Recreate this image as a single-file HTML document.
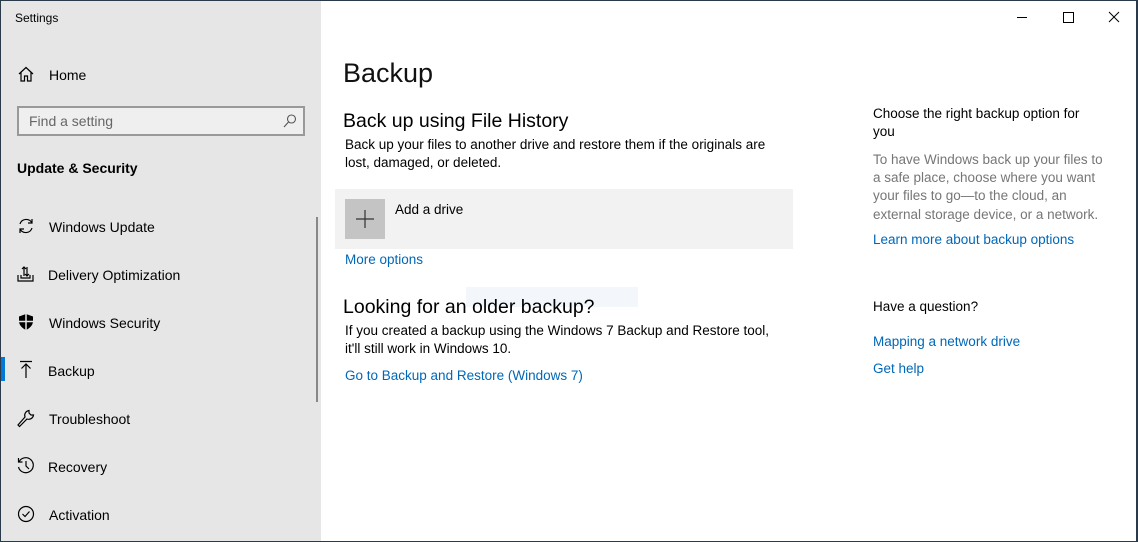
<!DOCTYPE html>
<html><head><meta charset="utf-8"><style>
*{margin:0;padding:0;box-sizing:border-box}
body{width:1138px;height:542px;overflow:hidden;background:#fff;font-family:"Liberation Sans",sans-serif;color:#000;position:relative}
.a{position:absolute;white-space:nowrap}
.side{position:absolute;left:0;top:0;width:321px;height:542px;background:#e6e6e6;border-left:1px solid #2b3a4a;border-bottom:1px solid #2b3a4a}
.nav{font-size:14px;color:#000}
.lnk{color:#0067b8;font-size:13.5px}
.p{font-size:13.5px}
svg{position:absolute}
</style></head><body>
<div class="side"></div>
<div style="position:absolute;right:0;top:0;width:2px;height:542px;background:#2b3a4a"></div>
<div style="position:absolute;left:0;top:0;width:1138px;height:1px;background:#2b3a4a"></div>
<div style="position:absolute;left:321px;bottom:0;width:817px;height:1px;background:#2b3a4a"></div>
<div class="a" style="left:15px;top:11px;font-size:12px">Settings</div>
<svg style="left:17px;top:65px" width="18" height="18" viewBox="0 0 18 18" fill="none" stroke="#000" stroke-width="1.2"><path d="M2 9 L9 2.5 L16 9 M4 7.5 V16 H7.5 V11 H10.5 V16 H14 V7.5"/></svg>
<div class="a nav" style="left:49px;top:67px">Home</div>
<div style="position:absolute;left:17px;top:106px;width:288px;height:30px;border:2px solid #999;background:#efefef"></div>
<div class="a" style="left:29px;top:113px;font-size:14px;color:#666">Find a setting</div>
<svg style="left:282px;top:113px" width="16" height="16" viewBox="0 0 16 16" fill="none" stroke="#555" stroke-width="1.1"><circle cx="9.5" cy="6" r="4"/><path d="M6.5 9 L2 14"/></svg>
<div class="a" style="left:17px;top:160px;font-size:14px;font-weight:bold">Update &amp; Security</div>
<svg style="left:16px;top:216px" width="20" height="20" viewBox="0 0 20 20" fill="none" stroke="#000" stroke-width="1.2"><path d="M4 8 A6.5 6.5 0 0 1 16 7 M16 3 V7 H12 M16 12 A6.5 6.5 0 0 1 4 13 M4 17 V13 H8"/></svg>
<div class="a nav" style="left:49px;top:219px">Windows Update</div>
<svg style="left:16px;top:264px" width="20" height="20" viewBox="0 0 20 20" fill="none" stroke="#000" stroke-width="1.2"><path d="M2 11 V17 H17 V11 M5 11 V14 H14 V11 M8 12 V3 M6 5 L8 3 L10 5 M11 3 V12 M9 10 L11 12 L13 10"/></svg>
<div class="a nav" style="left:48px;top:267px">Delivery Optimization</div>
<svg style="left:16px;top:312px" width="20" height="20" viewBox="0 0 20 20"><path d="M10 2 L17 4.5 V9 C17 13 14 16 10 18 C6 16 3 13 3 9 V4.5 Z" fill="#000"/><path d="M10 2 V18 M3 9.5 H17" stroke="#e6e6e6" stroke-width="1.5"/></svg>
<div class="a nav" style="left:49px;top:315px">Windows Security</div>
<div style="position:absolute;left:1px;top:357px;width:4px;height:24px;background:#0078d7"></div>
<svg style="left:16px;top:360px" width="20" height="20" viewBox="0 0 20 20" fill="none" stroke="#000" stroke-width="1.2"><path d="M4 1.5 H16 M10 18 V4 M5.5 8.5 L10 4 L14.5 8.5"/></svg>
<div class="a nav" style="left:48px;top:363px">Backup</div>
<svg style="left:16px;top:408px" width="20" height="20" viewBox="0 0 20 20" fill="none" stroke="#000" stroke-width="1.2"><path d="M2 17 L3.5 18.5 L11 11 C13.5 12 17 10.5 17.5 7 L15 7 L13 5 L13 2.5 C9.5 3 8 6.5 9 9 Z"/></svg>
<div class="a nav" style="left:49px;top:411px">Troubleshoot</div>
<svg style="left:16px;top:456px" width="20" height="20" viewBox="0 0 20 20" fill="none" stroke="#000" stroke-width="1.2"><path d="M3 6 A7.5 7.5 0 1 1 2.5 11 M2.5 2 V6 H6.5 M10 5 V10 L13 13"/></svg>
<div class="a nav" style="left:48px;top:459px">Recovery</div>
<svg style="left:16px;top:504px" width="20" height="20" viewBox="0 0 20 20" fill="none" stroke="#000" stroke-width="1.2"><circle cx="10" cy="10" r="7.5"/><path d="M6.5 10 L9 12.5 L13.5 7.5"/></svg>
<div class="a nav" style="left:49px;top:507px">Activation</div>
<div style="position:absolute;left:316px;top:217px;width:2px;height:185px;background:#888"></div>

<svg style="left:1010px;top:8px" width="120" height="20" viewBox="0 0 120 20" fill="none" stroke="#000" stroke-width="1"><path d="M7 9.5 H17"/><rect x="53.5" y="4.5" width="10" height="10"/><path d="M99 4 L109 14 M109 4 L99 14"/></svg>

<div class="a" style="left:343px;top:58px;font-size:27px;color:#111">Backup</div>
<div class="a" style="left:343px;top:110px;font-size:19.5px">Back up using File History</div>
<div class="a p" style="left:345px;top:137px">Back up your files to another drive and restore them if the originals are</div>
<div class="a p" style="left:345px;top:155px">lost, damaged, or deleted.</div>
<div style="position:absolute;left:335px;top:189px;width:458px;height:60px;background:#f2f2f2"></div>
<div style="position:absolute;left:345px;top:199px;width:40px;height:40px;background:#c4c4c4"></div>
<svg style="left:345px;top:199px" width="40" height="40" viewBox="0 0 40 40" stroke="#333" stroke-width="1.2"><path d="M20 11 V29 M11 20 H29"/></svg>
<div class="a p" style="left:395px;top:202px">Add a drive</div>
<div class="a lnk" style="left:345px;top:252px">More options</div>
<div style="position:absolute;left:466px;top:287px;width:172px;height:20px;background:#f3f7fb"></div>
<div class="a" style="left:343px;top:296px;font-size:19.5px">Looking for an older backup?</div>
<div class="a p" style="left:345px;top:323px">If you created a backup using the Windows 7 Backup and Restore tool,</div>
<div class="a p" style="left:345px;top:341px">it'll still work in Windows 10.</div>
<div class="a lnk" style="left:345px;top:368px">Go to Backup and Restore (Windows 7)</div>

<div class="a p" style="left:873px;top:106px">Choose the right backup option for</div>
<div class="a p" style="left:873px;top:124px">you</div>
<div class="a p" style="left:873px;top:152px;color:#767676">To have Windows back up your files to</div>
<div class="a p" style="left:873px;top:170px;color:#767676">a safe place, choose where you want</div>
<div class="a p" style="left:873px;top:188px;color:#767676">your files to go—to the cloud, an</div>
<div class="a p" style="left:873px;top:207px;color:#767676">external storage device, or a network.</div>
<div class="a lnk" style="left:873px;top:232px">Learn more about backup options</div>
<div class="a p" style="left:873px;top:299px">Have a question?</div>
<div class="a lnk" style="left:873px;top:334px">Mapping a network drive</div>
<div class="a lnk" style="left:873px;top:361px">Get help</div>
</body></html>
